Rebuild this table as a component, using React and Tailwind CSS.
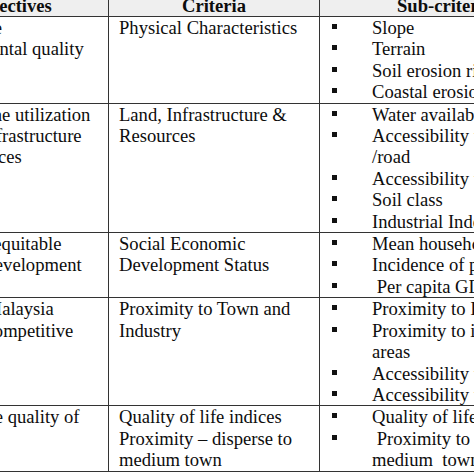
import React from 'react';

const rows = [
  {
    obj: ['Sustain the', 'environmental quality'],
    crit: ['Physical Characteristics'],
    sub: [['Slope'], ['Terrain'], ['Soil erosion risk'], ['Coastal erosion']],
  },
  {
    obj: ['Improve the utilization', 'of land, infrastructure', 'and resources'],
    crit: ['Land, Infrastructure &', 'Resources'],
    sub: [
      ['Water availability'],
      ['Accessibility to highway', '/road'],
      ['Accessibility to port'],
      ['Soil class'],
      ['Industrial Index'],
    ],
  },
  {
    obj: ['Foster an equitable', 'regional development'],
    crit: ['Social Economic', 'Development Status'],
    sub: [['Mean household income'], ['Incidence of poverty'], ['\u00a0Per capita GDP']],
  },
  {
    obj: ['Position Malaysia', 'globally competitive'],
    crit: ['Proximity to Town and', 'Industry'],
    sub: [
      ['Proximity to International airport'],
      ['Proximity to industrial', 'areas'],
      ['Accessibility to port'],
      ['Accessibility to highway'],
    ],
  },
  {
    obj: ['Elevate the quality of', 'life'],
    crit: ['Quality of life indices', 'Proximity \u2013 disperse to', 'medium town'],
    sub: [['Quality of life index'], ['\u00a0Proximity to small and', 'medium\u00a0 town']],
  },
];

export default function App() {
  return (
    <div className="w-[474px] h-[474px] overflow-hidden bg-white">
      <div className="ml-[-88px] mt-[-6.4px] w-[660px] font-['Liberation_Serif',serif] text-[18.6px] leading-[21.4px] text-[#0d0d0d]">
        {/* header */}
        <div className="flex bg-[#efefef] border-y-[1.5px] border-[#333] font-bold">
          <div className="w-[197px] border-r-[1.5px] border-[#333] text-center">Objectives</div>
          <div className="w-[211px] border-r-[1.5px] border-[#333] text-center">Criteria</div>
          <div className="w-[250px] text-center">Sub-criteria</div>
        </div>

        {rows.map((row, i) => (
          <div key={i} className="flex border-b-[1.5px] border-[#333]">
            <div className="w-[197px] shrink-0 border-r-[1.5px] border-[#333] pl-[8px] whitespace-nowrap">
              {row.obj.map((l) => (
                <div key={l}>{l}</div>
              ))}
            </div>
            <div className="w-[211px] shrink-0 border-r-[1.5px] border-[#333] pl-[10px] whitespace-nowrap">
              {row.crit.map((l) => (
                <div key={l}>{l}</div>
              ))}
            </div>
            <div className="w-[250px] shrink-0 pl-[12px] whitespace-nowrap">
              {row.sub.map((item, j) => (
                <div key={j}>
                  <div className="flex items-start">
                    <span className="mt-[7px] w-[5px] h-[5px] shrink-0 bg-[#111]"></span>
                    <span className="ml-[35px]">{item[0]}</span>
                  </div>
                  {item.slice(1).map((l) => (
                    <div key={l} className="pl-[40px]">{l}</div>
                  ))}
                </div>
              ))}
            </div>
          </div>
        ))}
      </div>
    </div>
  );
}
